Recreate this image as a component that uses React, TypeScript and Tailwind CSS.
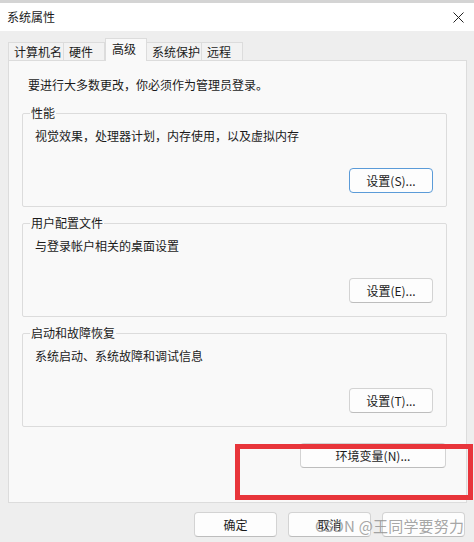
import React from "react";

const tabs = [
  { label: "计算机名", width: "w-[56px]" },
  { label: "硬件", width: "w-[42px]" },
  { label: "高级", width: "w-[42px]", active: true },
  { label: "系统保护", width: "w-[56px]" },
  { label: "远程", width: "w-[42px]" },
];

const groups = [
  { title: "性能", desc: "视觉效果，处理器计划，内存使用，以及虚拟内存", button: "设置(S)...", primary: true },
  { title: "用户配置文件", desc: "与登录帐户相关的桌面设置", button: "设置(E)..." },
  { title: "启动和故障恢复", desc: "系统启动、系统故障和调试信息", button: "设置(T)..." },
];

function Button({ children, primary, className = "" }: { children?: React.ReactNode; primary?: boolean; className?: string }) {
  return (
    <button
      className={
        "h-[25px] rounded-[4px] bg-[#fdfdfd] text-[12px] leading-none text-[#1b1b1b] border " +
        (primary ? "border-[#5b9bd8] " : "border-[#d3d3d3] border-b-[#bdbdbd] ") +
        className
      }
    >
      {children}
    </button>
  );
}

export default function App() {
  return (
    <div
      className="relative w-[474px] h-[542px] overflow-hidden bg-[#eeeeee] text-[#1b1b1b]"
      style={{ fontFamily: '"Noto Sans CJK SC", "Noto Sans", sans-serif' }}
    >
      {/* window edge */}
      <div className="h-[3px] bg-[#d4d4d4]" />

      {/* title bar */}
      <div className="h-[28px] bg-white flex items-center justify-between pl-[7px] pr-[9px]">
        <span className="text-[12px]">系统属性</span>
        <svg width="11" height="11" viewBox="0 0 11 11" className="mr-[1px]">
          <path d="M0.5 0.5 L10.5 10.5 M10.5 0.5 L0.5 10.5" stroke="#222" strokeWidth="1" />
        </svg>
      </div>

      {/* tabs */}
      <div className="flex items-end px-[8px] pt-[7px] h-[29px]">
        {tabs.map((t) =>
          t.active ? (
            <div
              key={t.label}
              className={`${t.width} h-[23px] -mb-px relative z-10 bg-[#f9f9f9] border border-b-0 border-[#dcdcdc] pl-[6px] pt-[2px] text-[12px] leading-[16px]`}
            >
              {t.label}
            </div>
          ) : (
            <div
              key={t.label}
              className={`${t.width} h-[18px] bg-[#f2f2f2] border border-b-0 border-[#dcdcdc] -ml-px first:ml-0 pl-[5px] text-[12px] leading-[17px]`}
            >
              {t.label}
            </div>
          )
        )}
      </div>

      {/* tab page */}
      <div className="ml-[8px] w-[459px] h-[443px] bg-[#f9f9f9] border border-[#dcdcdc] pt-[16px] pl-[13px] pr-[19px]">
        <p className="ml-[6px] text-[12px] leading-[16px]">要进行大多数更改，你必须作为管理员登录。</p>

        <div className="mt-[12px] flex flex-col gap-[8px]">
          {groups.map((g) => (
            <fieldset key={g.title} className="border border-[#dcdcdc] rounded-[2px] pl-[12px] pr-[13px] pb-[13px]">
              <legend className="-ml-[5px] px-[1px] text-[12px] leading-[16px]">{g.title}</legend>
              <p className="mt-[7px] text-[12px] leading-[16px]">{g.desc}</p>
              <div className="mt-[24px] flex justify-end">
                <Button primary={g.primary} className="w-[84px]">
                  {g.button}
                </Button>
              </div>
            </fieldset>
          ))}
        </div>

        <div className="mt-[16px] flex justify-end pr-[1px]">
          <Button className="w-[146px]">环境变量(N)...</Button>
        </div>
      </div>

      {/* dialog buttons */}
      <div className="flex justify-end gap-[11px] pt-[9px] pr-[9px]">
        <Button className="w-[83px]">确定</Button>
        <Button className="w-[83px]">取消</Button>
        <Button className="w-[83px] text-[#a0a0a0]" />
      </div>

      {/* highlight box */}
      <div className="absolute left-[235px] top-[444px] w-[238px] h-[56px] border-[5px] border-[#e8353b]" />

      {/* watermark */}
      <div className="absolute left-[315px] top-[514px] h-[22px] flex items-center text-[15px] leading-none text-[#8f8f8f]/80 tracking-[0.2px]">
        CSDN @王同学要努力
      </div>
    </div>
  );
}
